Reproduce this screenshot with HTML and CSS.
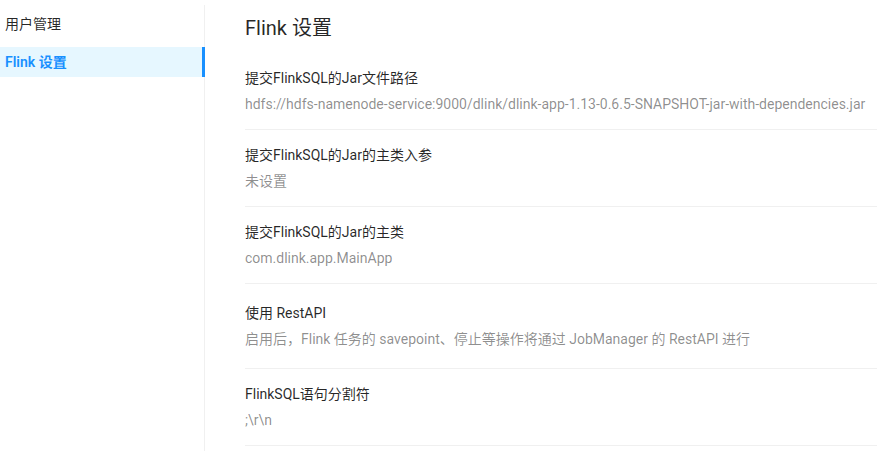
FILE: index.html
```html
<!DOCTYPE html>
<html lang="zh-CN">
<head>
<meta charset="utf-8">
<title>Flink 设置</title>
<link rel="stylesheet" href="styles.css">
</head>
<body>
<div class="layout">
  <aside class="sidebar">
    <ul class="menu">
      <li class="menu-item">用户管理</li>
      <li class="menu-item selected">Flink 设置</li>
    </ul>
  </aside>
  <main class="main">
    <h2 class="page-title">Flink 设置</h2>
    <ul class="list">
      <li class="list-item">
        <div class="item-title">提交FlinkSQL的Jar文件路径</div>
        <div class="item-desc">hdfs://hdfs-namenode-service:9000/dlink/dlink-app-1.13-0.6.5-SNAPSHOT-jar-with-dependencies.jar</div>
      </li>
      <li class="list-item">
        <div class="item-title">提交FlinkSQL的Jar的主类入参</div>
        <div class="item-desc">未设置</div>
      </li>
      <li class="list-item">
        <div class="item-title">提交FlinkSQL的Jar的主类</div>
        <div class="item-desc">com.dlink.app.MainApp</div>
      </li>
      <li class="list-item tall">
        <div class="item-title">使用 RestAPI</div>
        <div class="item-desc">启用后，Flink 任务的 savepoint、停止等操作将通过 JobManager 的 RestAPI 进行</div>
      </li>
      <li class="list-item">
        <div class="item-title">FlinkSQL语句分割符</div>
        <div class="item-desc">;\r\n</div>
      </li>
    </ul>
  </main>
</div>
</body>
</html>
```

FILE: styles.css
```css
* { box-sizing: border-box; }
html, body {
  margin: 0;
  padding: 0;
  background: #fff;
  overflow: hidden;
}
body {
  font-family: "Segoe UI", Roboto, "Noto Sans CJK SC", sans-serif;
  font-size: 14px;
  color: rgba(0, 0, 0, 0.85);
}
.layout {
  display: flex;
  margin-top: 5px;
  height: 446px;
}
.sidebar {
  width: 205px;
  flex: none;
  border-right: 1px solid #f0f0f0;
  padding-top: 4px;
}
.menu {
  list-style: none;
  margin: 0;
  padding: 0;
  display: flex;
  flex-direction: column;
  gap: 8px;
}
.menu-item {
  position: relative;
  height: 30px;
  line-height: 30px;
  padding-left: 5px;
  color: rgba(0, 0, 0, 0.85);
  white-space: nowrap;
}
.menu-item.selected {
  background: #e6f7ff;
  color: #1890ff;
  font-weight: 600;
}
.menu-item.selected::after {
  content: "";
  position: absolute;
  top: 0;
  bottom: 0;
  right: -1px;
  width: 3px;
  background: #1890ff;
}
.main {
  flex: 1;
  padding: 9px 0 0 40px;
  min-width: 0;
}
.page-title {
  margin: 0 0 11px;
  font-size: 20px;
  line-height: 28px;
  font-weight: 400;
  color: rgba(0, 0, 0, 0.85);
}
.list {
  list-style: none;
  margin: 0;
  padding: 0;
}
.list-item {
  padding: 14px 0;
  border-bottom: 1px solid #f0f0f0;
  display: flex;
  flex-direction: column;
  gap: 4px;
}
.list-item.tall {
  padding: 18px 0;
}
.item-title {
  line-height: 22px;
  color: rgba(0, 0, 0, 0.85);
  white-space: nowrap;
}
.item-desc {
  line-height: 22px;
  color: rgba(0, 0, 0, 0.45);
  white-space: nowrap;
}
```
